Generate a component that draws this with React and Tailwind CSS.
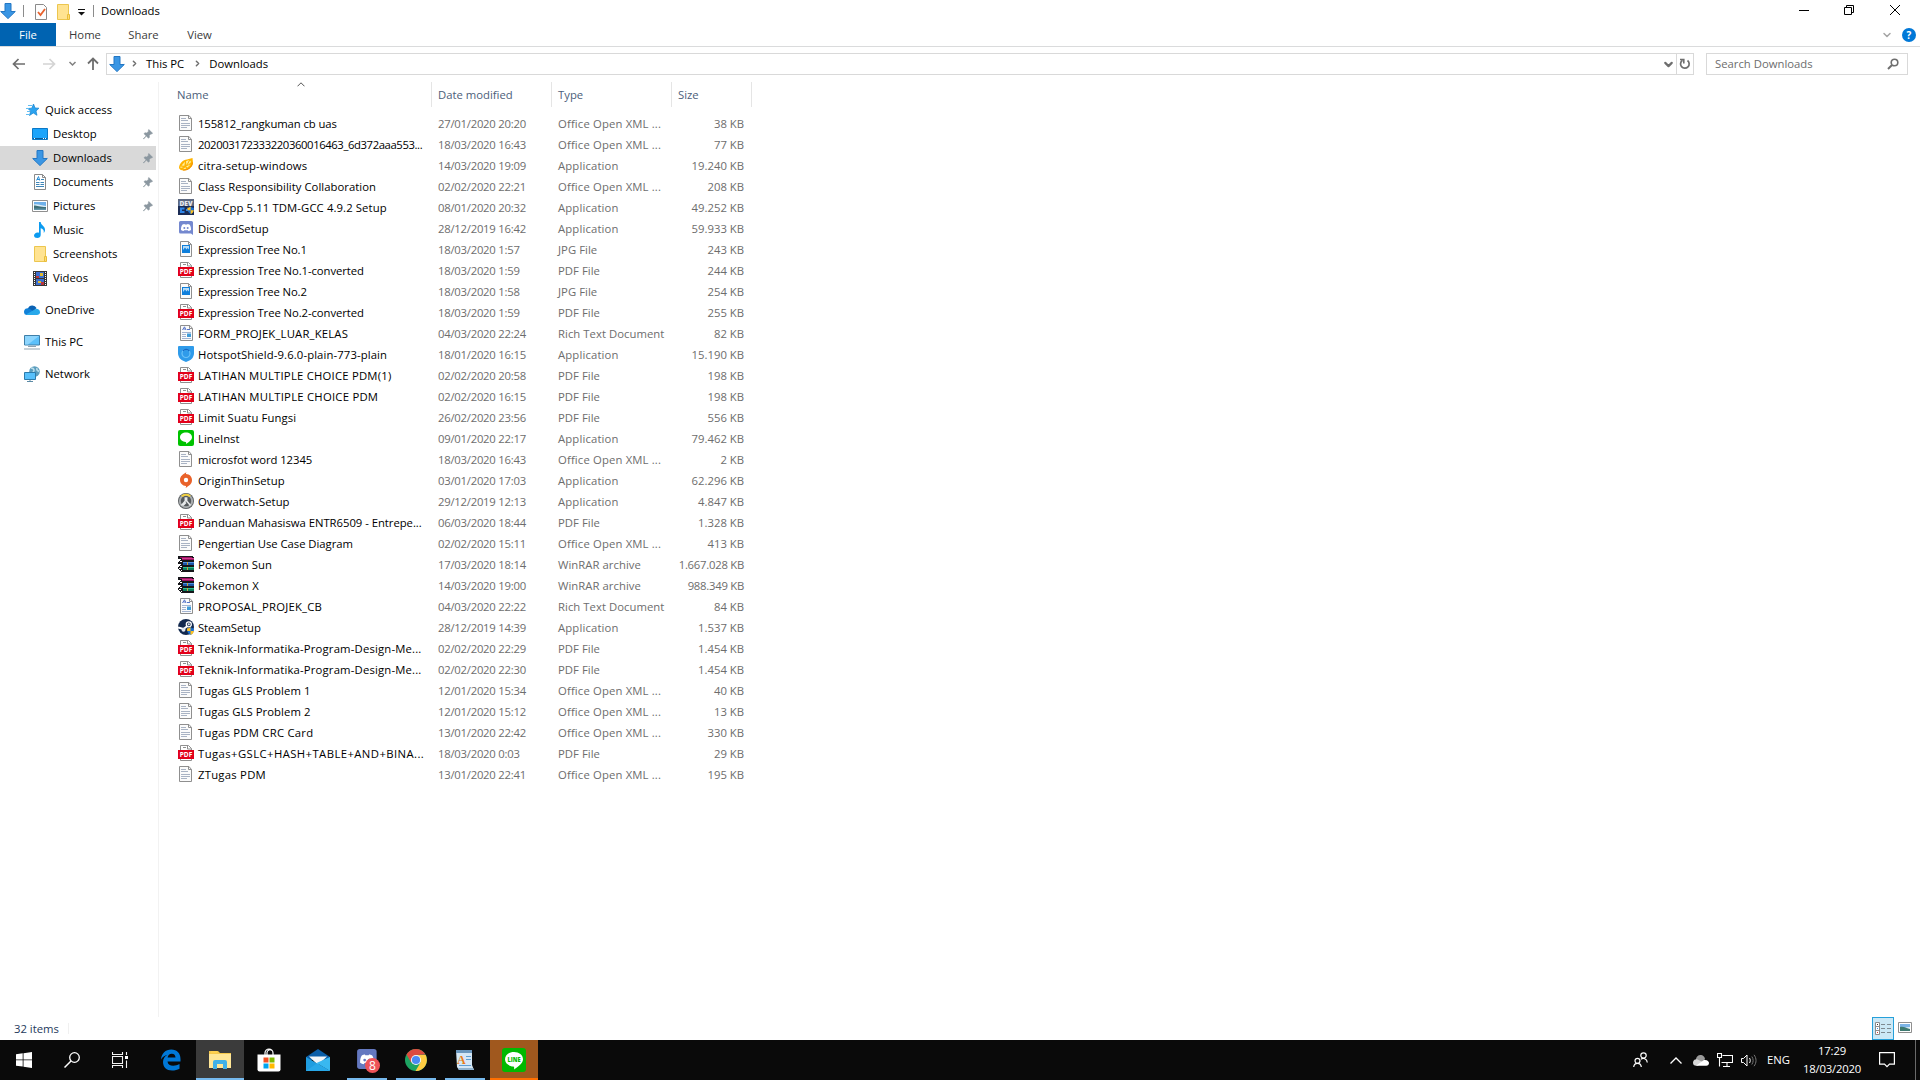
import { ChevronDown, ChevronRight } from 'lucide-react';

const DownArrow = ({ className }) => (
  <svg width="16" height="16" viewBox="0 0 16 16" className={className}>
    <path d="M5 .5h6v8h4.3L8 15.6.7 8.500H5z" fill="#3a96e4" stroke="#2377c4" strokeWidth="1" />
  </svg>
);

const FolderIcon = () => (
  <svg width="16" height="16" viewBox="0 0 16 16">
    <path d="M2.500.5h11v15h-11z" fill="#ffe391" stroke="#ecc64f" />
    <path d="M12.500 10.500h2v5h-2z" fill="#ffdc74" stroke="#e8bd3a" />
  </svg>
);

const Page = ({ children }) => (
  <>
    <path d="M1.500.5h9.500l2.500 3v12h-12z" fill="#fbfbfb" stroke="#8f8f8f" />
    <path d="M10.500.5v3h3" fill="none" stroke="#8f8f8f" />
    {children}
  </>
);

const DocIcon = () => (
  <svg width="16" height="16" viewBox="0 0 16 16">
    <Page>
      <path d="M3 3.500h5M3 5.500h7M3 8.500h9M3 10.500h9M3 12.500h6" stroke="#a9b3c4" />
    </Page>
  </svg>
);

const RtfIcon = () => (
  <svg width="16" height="16" viewBox="0 0 16 16">
    <g transform="translate(1 0)">
      <Page>
        <path d="M3.500 5 5.500 1.800 7 5M4.500 4h2M8 4.500h3" fill="none" stroke="#5573c8" />
        <path d="M3 7.500h9M3 9.500h4M3 11.500h4M3 13.500h9" stroke="#a3b4d2" />
        <path d="M8 8.500h4v3.500H8z" fill="#3f9bd8" />
      </Page>
    </g>
  </svg>
);

const DocumentsIcon = () => (
  <svg width="16" height="16" viewBox="0 0 16 16">
    <path d="M2.500.5h8l3 3v12h-11z" fill="#fff" stroke="#8a8a8a" />
    <path d="M10.500.5v3h3" fill="none" stroke="#8a8a8a" />
    <path d="M4.500 6.500 6.500 2.500l1.200 4M5 5.500h3" fill="none" stroke="#2b8fd6" />
    <path d="M9 5.500h3M4 8.500h3.500M8.500 8.500h3.500M4 10.500h3.500M8.500 10.500h3.500M4 12.500h8" stroke="#3f86b8" />
  </svg>
);

const JpgIcon = () => (
  <svg width="16" height="16" viewBox="0 0 16 16">
    <path d="M2.500.5h8l3 3v12h-11z" fill="#fbfbfb" stroke="#8f8f8f" />
    <path d="M10.500.5v3h3" fill="none" stroke="#8f8f8f" />
    <path d="M4 4h8v8H4z" fill="#0f7fdc" />
    <path d="M5 5h6v3.500L9.500 7 8.500 8.500 7 6.500 5 9z" fill="#b5dcf8" />
  </svg>
);

const PdfIcon = () => (
  <svg width="16" height="16" viewBox="0 0 16 16">
    <path d="M2.500.5h8l3 3v12h-11z" fill="#fff" stroke="#8f8f8f" />
    <path d="M9.500.5v3.500h4M5 2.500h3" fill="none" stroke="#8f8f8f" />
    <path d="M0 5h16v9H0z" fill="#e2001a" />
    <text x="8" y="12" textAnchor="middle" fontSize="7" fontWeight="700" fill="#fff" className="font-['Open_Sans',sans-serif]" textLength="12.500" lengthAdjust="spacingAndGlyphs">PDF</text>
  </svg>
);

const CitraIcon = () => (
  <svg width="16" height="16" viewBox="0 0 16 16">
    <path d="M1 10.500C1.500 6.500 5 2.500 9 2.500L14.500 1 15 6c-.500 4.500-5 7.500-9 7.500-3 0-5-1-5-3z" fill="#ffb400" />
    <path d="M3.500 8.500 7 4.800l-.7 4zM8 4.200l3-1.200-2.500 5zM12 3.500l1.200 1.500L9.500 8.200zM12.500 7.500 9.500 10.500 8 9.500zM7.500 10.200l.5 1.600-3.500.6zM5.500 10l-3 1V9.500z" fill="#fff0a0" />
    <path d="M14.300 5.500c.2 4.500-4.500 8-9.300 7.500" fill="none" stroke="#f28a00" />
  </svg>
);

const ShieldOverlay = () => (
  <>
    <path d="M9 9.500c2 0 3-1 3.500-1.500.8.800 2 1.500 3.500 1.500 0 3-1 5.500-3.500 6.500C10 15 9 12.500 9 9.500z" fill="#1c6fd0" />
    <path d="M12.500 8v4H16c-.5 2-1.500 3.300-3.500 4v-4H9.200L9 9.500c2 0 3-1 3.500-1.500z" fill="#ffc220" />
  </>
);

const DevIcon = () => (
  <svg width="16" height="16" viewBox="0 0 16 16">
    <path d="M0 0h16v16H0z" fill="#1b2c55" />
    <path d="M0 0h16v7H0z" fill="#5c6880" />
    <text x="8" y="6.500" textAnchor="middle" fontSize="7" fontWeight="800" fill="#e6e9ee" className="font-['Open_Sans',sans-serif]" textLength="13" lengthAdjust="spacingAndGlyphs">DEV</text>
    <path d="M6.500 9.500H3v3.500h3.500M8 11h2" fill="none" stroke="#2f86e8" strokeWidth="2" />
    <g transform="translate(1 0) scale(.93)"><ShieldOverlay /></g>
  </svg>
);

const discordFace = 'M4.200 4.800C5 4.200 6 4 6.500 4l.3.600h2.400l.3-.6c.5 0 1.500.2 2.300.8.9 1.500 1.300 3.200 1.200 5.200-.9.700-1.700 1-2.600 1.100l-.6-.9H6.200l-.6.900C4.700 11 3.900 10.700 3 10c-.1-2 .3-3.700 1.200-5.200z';

const DiscordIcon = () => (
  <svg width="16" height="16" viewBox="0 0 16 16">
    <path d="M2.500 1h11A1.500 1.500 0 0 1 15 2.500V15l-2-1.500H2.500A1.500 1.500 0 0 1 1 12V2.500A1.500 1.500 0 0 1 2.500 1z" fill="#7488cf" />
    <path d={discordFace} fill="#fff" />
    <circle cx="6.300" cy="8" r="1" fill="#7488cf" />
    <circle cx="9.700" cy="8" r="1" fill="#7488cf" />
  </svg>
);

const HotspotIcon = () => (
  <svg width="16" height="16" viewBox="0 0 16 16">
    <path d="M1 0h14a1 1 0 0 1 1 1v6c0 4.500-3 7.500-8 9-5-1.500-8-4.500-8-9V1a1 1 0 0 1 1-1z" fill="#2f9bea" />
    <circle cx="8" cy="7.500" r="4" fill="none" stroke="#6cc2f8" strokeWidth="1.200" />
    <path d="M5 4.800a4 4 0 0 1 6.300.2" fill="none" stroke="#1769c4" strokeWidth="1.300" />
  </svg>
);

const LineIcon = () => (
  <svg width="16" height="16" viewBox="0 0 16 16">
    <rect width="16" height="16" rx="2" fill="#00c300" />
    <path d="M8 2.500c3.300 0 6 2 6 4.700 0 2.600-3 4.800-6 6.800.3-1 .2-1.800-.3-2C4.500 11.700 2 9.800 2 7.200 2 4.500 4.700 2.500 8 2.500z" fill="#fff" />
  </svg>
);

const OriginIcon = () => (
  <svg width="16" height="16" viewBox="0 0 16 16">
    <path d="M8.500 0c-.5.800-.6 1.400-.5 2 3.600 0 6 2.800 6 5.900C14 12 11 13.500 7.500 16c.5-.9.600-1.500.5-2.100-3.600 0-6-2.800-6-5.900C2 4 5 2.500 8.500 0z" fill="#e9622a" />
    <circle cx="8" cy="8" r="2.200" fill="#fff" />
  </svg>
);

const OverwatchIcon = () => (
  <svg width="16" height="16" viewBox="0 0 16 16">
    <circle cx="8" cy="8" r="8" fill="#55595c" />
    <circle cx="8" cy="8" r="6.200" fill="none" stroke="#a9adaf" strokeWidth="2" />
    <path d="M3.800 3.300a6.200 6.200 0 0 1 8.400 0" fill="none" stroke="#f3d03b" strokeWidth="2" />
    <path d="M3.500 12.500 7.300 8V5h1.400v3l3.800 4.500M8 9.500l-3 3" fill="none" stroke="#e8eaeb" strokeWidth="1.500" />
  </svg>
);

const RarIcon = () => (
  <svg width="16" height="16" viewBox="0 0 16 16" shapeRendering="crispEdges">
    <path d="M0 0h13l3 1v15H4l-4-3v-2l2-1-2-2V6l2-1-2-2z" fill="#16161a" />
    <path d="M2 1h12v1H2zM4 3h12v1H4z" fill="#9c0f62" />
    <path d="M4 2h12v1H4z" fill="#d13a8c" />
    <path d="M5 6h11v3H5z" fill="#1b55a8" />
    <path d="M5 6h11v1H5z" fill="#4f92e0" />
    <path d="M5 11h11v3H5z" fill="#0b7f5d" />
    <path d="M5 11h11v1H5z" fill="#2fbf90" />
    <path d="M1 3h2v1H1zM2 5h2v1H2zM1 8h2v1H1zM2 10h2v1H2zM1 12h2v1H1zM3 14h1v1H3z" fill="#fff" />
    <path d="M9 6h1v3H9zM9 11h1v3H9z" fill="#c7a43f" />
  </svg>
);

const SteamIcon = () => (
  <svg width="16" height="16" viewBox="0 0 16 16">
    <circle cx="8" cy="8" r="8" fill="#13294e" />
    <circle cx="10.800" cy="5.300" r="2.500" fill="none" stroke="#fff" strokeWidth="1.300" />
    <circle cx="10.800" cy="5.300" r="1.100" fill="#dfe6ef" />
    <path d="M0 8.500 5.500 10 9.500 7" fill="none" stroke="#fff" strokeWidth="2" />
    <circle cx="5.500" cy="10.800" r="2" fill="#dfe6ef" />
    <ShieldOverlay />
  </svg>
);

const icons = {
  doc: DocIcon,
  rtf: RtfIcon,
  jpg: JpgIcon,
  pdf: PdfIcon,
  citra: CitraIcon,
  dev: DevIcon,
  discord: DiscordIcon,
  hotspot: HotspotIcon,
  line: LineIcon,
  origin: OriginIcon,
  overwatch: OverwatchIcon,
  rar: RarIcon,
  steam: SteamIcon,
};

const XML = 'Office Open XML ...';
const APP = 'Application';
const PDF = 'PDF File';
const RTF = 'Rich Text Document';

// icon, name, date, type, size, letter spacing of the name
const files = [
  ['doc', '155812_rangkuman cb uas', '27/01/2020 20:20', XML, '38 KB', 'tracking-[-0.1px]'],
  ['doc', '202003172333220360016463_6d372aaa553...', '18/03/2020 16:43', XML, '77 KB', 'tracking-[-0.4px]'],
  ['citra', 'citra-setup-windows', '14/03/2020 19:09', APP, '19.240 KB', 'tracking-[0.15px]'],
  ['doc', 'Class Responsibility Collaboration', '02/02/2020 22:21', XML, '208 KB', 'tracking-[0.04px]'],
  ['dev', 'Dev-Cpp 5.11 TDM-GCC 4.9.2 Setup', '08/01/2020 20:32', APP, '49.252 KB', 'tracking-[0.11px]'],
  ['discord', 'DiscordSetup', '28/12/2019 16:42', APP, '59.933 KB'],
  ['jpg', 'Expression Tree No.1', '18/03/2020 1:57', 'JPG File', '243 KB', 'tracking-[-0.14px]'],
  ['pdf', 'Expression Tree No.1-converted', '18/03/2020 1:59', PDF, '244 KB', 'tracking-[-0.08px]'],
  ['jpg', 'Expression Tree No.2', '18/03/2020 1:58', 'JPG File', '254 KB', 'tracking-[-0.14px]'],
  ['pdf', 'Expression Tree No.2-converted', '18/03/2020 1:59', PDF, '255 KB', 'tracking-[-0.08px]'],
  ['rtf', 'FORM_PROJEK_LUAR_KELAS', '04/03/2020 22:24', RTF, '82 KB', 'tracking-[0.18px]'],
  ['hotspot', 'HotspotShield-9.6.0-plain-773-plain', '18/01/2020 16:15', APP, '15.190 KB', 'tracking-[0.11px]'],
  ['pdf', 'LATIHAN MULTIPLE CHOICE PDM(1)', '02/02/2020 20:58', PDF, '198 KB', 'tracking-[0.22px]'],
  ['pdf', 'LATIHAN MULTIPLE CHOICE PDM', '02/02/2020 16:15', PDF, '198 KB', 'tracking-[0.24px]'],
  ['pdf', 'Limit Suatu Fungsi', '26/02/2020 23:56', PDF, '556 KB', 'tracking-[0.1px]'],
  ['line', 'LineInst', '09/01/2020 22:17', APP, '79.462 KB'],
  ['doc', 'microsfot word 12345', '18/03/2020 16:43', XML, '2 KB', 'tracking-[-0.06px]'],
  ['origin', 'OriginThinSetup', '03/01/2020 17:03', APP, '62.296 KB', 'tracking-[0.08px]'],
  ['overwatch', 'Overwatch-Setup', '29/12/2019 12:13', APP, '4.847 KB', 'tracking-[0.05px]'],
  ['pdf', 'Panduan Mahasiswa ENTR6509 - Entrepe...', '06/03/2020 18:44', PDF, '1.328 KB', 'tracking-[-0.03px]'],
  ['doc', 'Pengertian Use Case Diagram', '02/02/2020 15:11', XML, '413 KB', 'tracking-[-0.04px]'],
  ['rar', 'Pokemon Sun', '17/03/2020 18:14', 'WinRAR archive', '1.667.028 KB', 'tracking-[0.1px]'],
  ['rar', 'Pokemon X', '14/03/2020 19:00', 'WinRAR archive', '988.349 KB', 'tracking-[0.15px]'],
  ['rtf', 'PROPOSAL_PROJEK_CB', '04/03/2020 22:22', RTF, '84 KB', 'tracking-[0.2px]'],
  ['steam', 'SteamSetup', '28/12/2019 14:39', APP, '1.537 KB', 'tracking-[-0.1px]'],
  ['pdf', 'Teknik-Informatika-Program-Design-Me...', '02/02/2020 22:29', PDF, '1.454 KB', 'tracking-[0.17px]'],
  ['pdf', 'Teknik-Informatika-Program-Design-Me...', '02/02/2020 22:30', PDF, '1.454 KB', 'tracking-[0.17px]'],
  ['doc', 'Tugas GLS Problem 1', '12/01/2020 15:34', XML, '40 KB', 'tracking-[0.06px]'],
  ['doc', 'Tugas GLS Problem 2', '12/01/2020 15:12', XML, '13 KB', 'tracking-[0.06px]'],
  ['doc', 'Tugas PDM CRC Card', '13/01/2020 22:42', XML, '330 KB', 'tracking-[0.24px]'],
  ['pdf', 'Tugas+GSLC+HASH+TABLE+AND+BINA...', '18/03/2020 0:03', PDF, '29 KB', 'tracking-[0.42px]'],
  ['doc', 'ZTugas PDM', '13/01/2020 22:41', XML, '195 KB', 'tracking-[0.25px]'],
];

const QuickAccessIcon = () => (
  <svg width="16" height="16" viewBox="0 0 16 16">
    <path d="m9.500 2 1.600 4 3.900.2-3 2.800 1 4.300-3.700-2.300-3.800 2.500 1.200-4.400L3.800 6.500l4-.3z" fill="#2ba3f0" stroke="#1683cf" strokeWidth=".7" />
    <path d="M4 3.500h4M2 6.500h3M3 9.500h3M2 12.500h4" stroke="#62bdf2" />
  </svg>
);

const DesktopIcon = () => (
  <svg width="16" height="16" viewBox="0 0 16 16">
    <path d="M.5 2.500h15v11H.5z" fill="#1ba4fb" stroke="#0b78c6" />
    <path d="M1 12.500h14" stroke="#0a5b98" />
    <path d="M2 12.500h1M11 12.500h1M13 12.500h1" stroke="#fff" />
  </svg>
);

const PicturesIcon = () => (
  <svg width="16" height="16" viewBox="0 0 16 16">
    <path d="M.5 2.500h15v11H.5z" fill="#fff" stroke="#8f8f8f" />
    <path d="M2 4h12v8H2z" fill="#6fb1ea" />
    <path d="M2 6.500c4-1 7 1 12 1.500V9H2z" fill="#d9ecf7" />
    <path d="M2 7.500c3 0 6 1.500 12 1.500v3H2z" fill="#3d6f78" />
    <path d="M2 10.500h12V12H2z" fill="#5f93a8" />
  </svg>
);

const MusicIcon = () => (
  <svg width="16" height="16" viewBox="0 0 16 16">
    <path d="M7 0h1.700c.2 3.500 4.800 4 4.300 8.500-.2 1.200-.7 2-1.300 2.500.6-3-1-4.200-3-4.700V13c0 1.800-1.500 3-3.400 3C3.500 16 2 15.200 2 13.500S3.700 10.400 5.500 10.400c.6 0 1.100.1 1.500.3z" fill="#0c9bf0" />
  </svg>
);

const VideosIcon = () => (
  <svg width="16" height="16" viewBox="0 0 16 16">
    <path d="M1 1h14v15H1z" fill="#363636" />
    <path d="M4 2h8v6H4zM4 9h8v6H4z" fill="#3c6fd0" />
    <path d="M4 6h3v2H4zM9 12h3v3H9z" fill="#b9343c" />
    <path d="M8 3h3v3H8zM6 11h3v2H6z" fill="#e0b92f" />
    <path d="M2.500 2v13M13.500 2v13" stroke="#fff" strokeDasharray="1 1" />
  </svg>
);

const OneDriveIcon = () => (
  <svg width="16" height="16" viewBox="0 0 16 16">
    <path d="M4 6.500A4.600 4.600 0 0 1 12.500 6L9 10 2 9z" fill="#0a62b4" />
    <path d="M0 10a3.700 3.700 0 0 1 5-3.600L12 11l-9.500 2A3 3 0 0 1 0 10z" fill="#1181d8" />
    <path d="M2 12.500 12 6.700c2.500 0 4 1.500 4 3.500 0 1.800-1.500 2.800-3 2.800H3z" fill="#28a8ea" />
  </svg>
);

const ThisPcIcon = () => (
  <svg width="16" height="16" viewBox="0 0 16 16">
    <path d="M.5 1.500h15v9.500H.5z" fill="#5cc0fa" stroke="#3f7fa8" />
    <path d="M1 2h14L4 10.500H1z" fill="#8dd5fd" />
    <path d="M4 12.500h8M0 15h16" stroke="#8fa3b0" />
  </svg>
);

const NetworkIcon = () => (
  <svg width="16" height="16" viewBox="0 0 16 16">
    <circle cx="10.500" cy="5.500" r="5.300" fill="#5b9dbd" />
    <path d="M7 2c2 0 3 1 3 2.500S8 6 8 8M13 2c-1 2 1 3 2 3.500" fill="none" stroke="#b9dcea" strokeWidth="1.500" />
    <path d="M.5 6.500h11v7H.5z" fill="#57c0fb" stroke="#2c7bab" />
    <path d="M3 15.500h6M6 14v1" stroke="#5b8aa5" />
  </svg>
);

const PinIcon = () => (
  <svg width="10" height="11" viewBox="0 0 10 11">
    <path d="m5.800.5 3.800 3.800-1 .6-.6-.1L6.300 6.500l.1 1.800-.9.900-2.200-2.100L.6 10.100l-.3-.3 2.900-2.900L1 4.700l1-.9 1.800.1 1.800-1.700-.2-.7z" fill="#8b97a0" stroke="#8b97a0" strokeWidth=".6" />
  </svg>
);

const quickItems = [
  { label: 'Desktop', icon: DesktopIcon, pinned: true },
  { label: 'Downloads', icon: DownArrow, pinned: true, active: true },
  { label: 'Documents', icon: DocumentsIcon, pinned: true },
  { label: 'Pictures', icon: PicturesIcon, pinned: true },
  { label: 'Music', icon: MusicIcon },
  { label: 'Screenshots', icon: FolderIcon },
  { label: 'Videos', icon: VideosIcon },
];

const TitleBar = () => (
  <div className="flex h-[23px] items-center">
    <DownArrow className="mb-px" />
    <div className="mb-px ml-[7px] h-3 w-px bg-[#8c8c8c]" />
    <svg width="14" height="16" viewBox="0 0 14 16" className="ml-[10px]">
      <path d="M1.500.5h8l3 3v12h-11z" fill="#fdfdfd" stroke="#8a8a8a" />
      <path d="m4 8 2.500 3L11 5" fill="none" stroke="#e8612c" strokeWidth="1.800" />
    </svg>
    <div className="ml-[7px]"><FolderIcon /></div>
    <svg width="7" height="7" viewBox="0 0 7 7" className="mt-[2px] ml-[7px]">
      <path d="M0 .5h7" stroke="#111" />
      <path d="M0 3h7L3.500 6.500z" fill="#111" />
    </svg>
    <div className="mb-px ml-2 h-3 w-px bg-[#8c8c8c]" />
    <span className="mb-px ml-[7px] text-black">Downloads</span>
    <div className="ml-auto flex h-full items-start">
      <svg width="10" height="20" viewBox="0 0 10 20" className="mr-[35px]">
        <path d="M0 10.500h10" stroke="#000" />
      </svg>
      <svg width="10" height="20" viewBox="0 0 10 20" className="mr-9">
        <path d="M.5 7.500h7v7h-7zM2.500 7.500v-2h7v7h-2" fill="none" stroke="#000" />
      </svg>
      <svg width="10" height="20" viewBox="0 0 10 20" className="mr-[20px]">
        <path d="m0 5 10 10M10 5 0 15" stroke="#000" />
      </svg>
    </div>
  </div>
);

const Ribbon = () => (
  <div className="flex h-6 items-center border-b border-[#dadbdc] text-[#3b3b3b]">
    <div className="flex h-full w-14 items-center justify-center bg-[#0063b1] text-white">File</div>
    <span className="w-[58px] text-center">Home</span>
    <span className="w-[59px] text-center">Share</span>
    <span className="w-[53px] text-center">View</span>
    <ChevronDown size={12} strokeWidth={3} className="mr-[9px] ml-auto text-[#a5a5a5]" />
    <div className="mr-1 flex size-[14px] items-center justify-center rounded-full bg-[#0078d7] text-[10px] font-bold text-white">?</div>
  </div>
);

const AddressBar = () => (
  <div className="flex h-[34px] items-center pb-px">
    <svg width="88" height="14" viewBox="0 0 88 14" className="ml-3" fill="none">
      <path d="M13 7H2M6.500 2 1.500 7l5 5" stroke="#6e6e6e" strokeWidth="1.700" />
      <path d="M31 7h11M37.500 2l5 5-5 5" stroke="#d4d4d4" strokeWidth="1.700" />
      <path d="m57.500 5 3 3 3-3" stroke="#808080" strokeWidth="1.500" />
      <path d="M81 13V2M76 6.500l5-5 5 5" stroke="#6e6e6e" strokeWidth="1.800" />
    </svg>
    <div className="ml-[6px] flex h-[22px] w-[1588px] items-center border border-[#d9d9d9] text-black">
      <DownArrow className="ml-[2px]" />
      <ChevronRight size={9} strokeWidth={4} className="ml-[5px] text-[#6e6e6e]" />
      <span className="ml-[7px]">This PC</span>
      <ChevronRight size={9} strokeWidth={4} className="ml-[9px] text-[#6e6e6e]" />
      <span className="ml-[7px]">Downloads</span>
      <ChevronDown size={13} strokeWidth={4} className="mt-[2px] mr-px ml-auto text-[#6e6e6e]" />
      <div className="flex h-full w-[17px] items-center justify-center border-l border-[#d9d9d9]">
        <svg width="12" height="12" viewBox="0 0 12 12" fill="none">
          <path d="M8.500 2.500a4.300 4.300 0 1 1-5-.2" stroke="#6e6e6e" strokeWidth="1.700" />
          <path d="M1 1.500h3.800v4" stroke="#6e6e6e" strokeWidth="1.600" />
        </svg>
      </div>
    </div>
    <div className="ml-3 flex h-[22px] w-[202px] items-center border border-[#d9d9d9] pr-2 pl-2">
      <span className="text-[#6d6d6d]">Search Downloads</span>
      <svg width="12" height="12" viewBox="0 0 12 12" className="ml-auto" fill="none">
        <circle cx="7.500" cy="4.500" r="3.300" stroke="#6e6e6e" strokeWidth="1.600" />
        <path d="M5 7 1 11" stroke="#6e6e6e" strokeWidth="2" />
      </svg>
    </div>
  </div>
);

const Sidebar = () => (
  <aside className="mt-[1px] w-[159px] border-r border-[#f2f2f2] pt-4 text-black">
    <div className="flex h-6 items-center gap-[5px] pl-6">
      <QuickAccessIcon />
      <span>Quick access</span>
    </div>
    {quickItems.map(({ label, icon: Icon, pinned, active }) => (
      <div
        key={label}
        className={`flex h-6 w-[156px] items-center gap-[5px] pr-[3px] pl-8 ${active ? 'bg-[#d9d9d9]' : ''}`}
      >
        <Icon />
        <span className="flex-1">{label}</span>
        {pinned && <PinIcon />}
      </div>
    ))}
    <div className="mt-2 flex h-6 items-center gap-[5px] pl-6">
      <OneDriveIcon />
      <span>OneDrive</span>
    </div>
    <div className="mt-2 flex h-6 items-center gap-[5px] pl-6">
      <ThisPcIcon />
      <span>This PC</span>
    </div>
    <div className="mt-2 flex h-6 items-center gap-[5px] pl-6">
      <NetworkIcon />
      <span>Network</span>
    </div>
  </aside>
);

const FileList = () => (
  <main className="flex-1">
    <div className="relative mt-px flex h-[25px] items-center pl-[18px] text-[#4c607a]">
      <svg width="8" height="5" viewBox="0 0 8 5" fill="none" className="absolute top-0 left-[138px]">
        <path d="m.5 4.300 3.500-3.500 3.500 3.500" stroke="#555" />
      </svg>
      <div className="flex h-full w-[255px] items-center border-r border-[#e5e5e5]">Name</div>
      <div className="flex h-full w-[120px] items-center border-r border-[#e5e5e5] pl-[6px]">Date modified</div>
      <div className="flex h-full w-[120px] items-center border-r border-[#e5e5e5] pl-[6px]">Type</div>
      <div className="flex h-full w-[80px] items-center border-r border-[#e5e5e5] pl-[6px]">Size</div>
    </div>
    <div className="pt-[6px]">
      {files.map(([icon, name, date, type, size, tracking], i) => {
        const Icon = icons[icon];
        return (
          <div key={i} className="flex h-[21px] items-center pl-[19px] text-[#6d6d6d]">
            <div className="mb-px"><Icon /></div>
            <span className={`ml-1 w-[240px] whitespace-nowrap text-black ${tracking || ''}`}>{name}</span>
            <span className="w-[120px] tracking-[-0.24px] whitespace-nowrap">{date}</span>
            <span className={`w-[106px] whitespace-nowrap ${type === XML || type === APP ? 'tracking-[0.15px]' : 'tracking-[0.04px]'}`}>{type}</span>
            <span className={`w-[80px] text-right whitespace-nowrap ${size.length > 9 ? 'tracking-[-0.25px]' : ''}`}>{size}</span>
          </div>
        );
      })}
    </div>
  </main>
);

const StatusBar = () => (
  <div className="flex h-[23px] items-center">
    <span className="ml-[14px] w-[54px] text-[#1e395b]">32 items</span>
    <div className="h-[11px] w-px bg-[#f0f0f0]" />
    <div className="ml-auto flex h-[23px] w-[22px] items-center justify-center border border-[#26a0da] bg-[#cbe8f6]">
      <svg width="16" height="14" viewBox="0 0 16 14">
        <path d="M.5.5h4v12h-4zM.5 4.500h4M.5 8.500h4" fill="#fff" stroke="#8c8c8c" />
        <path d="M6 2.500h4M12 2.500h4M6 6.500h4M12 6.500h4M6 10.500h4M12 10.500h4" stroke="#7d8a92" />
        <path d="M2 2h1v1H2z" fill="#333" />
        <path d="M2 6h1v1H2z" fill="#3d8fe0" />
        <path d="M2 10h1v1H2z" fill="#d63a2e" />
      </svg>
    </div>
    <svg width="14" height="11" viewBox="0 0 14 11" className="mr-2 mb-[2px] ml-1">
      <path d="M.5.5h13v10H.5z" fill="#fff" stroke="#8f8f8f" />
      <path d="M2 2h10v7H2z" fill="#7db4e6" />
      <path d="M2 5c3-1 6 1 10 1.500V9H2z" fill="#3e7a70" />
      <path d="M7 5.500 12 5v2z" fill="#e3f0f5" />
    </svg>
  </div>
);

const StartIcon = () => (
  <svg width="16" height="16" viewBox="0 0 16 16">
    <path d="M0 2.300 6.700 1.300v6.200H0zM7.500 1.200 16 0v7.500H7.500zM0 8.300h6.700v6.300L0 13.700zM7.500 8.300H16V16l-8.500-1.200z" fill="#fff" />
  </svg>
);

const TaskSearchIcon = () => (
  <svg width="16" height="16" viewBox="0 0 16 16" fill="none">
    <circle cx="10.500" cy="5.500" r="4.800" stroke="#fff" strokeWidth="1.300" />
    <path d="M7 9 .5 15.500" stroke="#fff" strokeWidth="1.500" />
  </svg>
);

const TaskViewIcon = () => (
  <svg width="16" height="16" viewBox="0 0 16 16" fill="none">
    <path d="M.5 0v2.500h10V0M.5 16v-2.500h10V16M.5 4.500h10v7H.5zM14.500 0v3M14.500 8.500V16" stroke="#f2f2f2" strokeWidth="1.100" />
    <path d="M13 4h3v3h-3z" fill="#fff" />
  </svg>
);

const EdgeIcon = () => (
  <svg width="22" height="22" viewBox="0 0 22 22">
    <path d="M1 10.500C1.500 4.500 5.500.500 11.200.5c6 0 9.300 4 9.300 9.500v2.500H7.500c.3 3 2.600 4.200 5.700 4.200 2.400 0 4.200-.6 6.300-1.700v4.700c-2.200 1.200-4.500 1.800-7.500 1.800-5.500 0-9-3.500-9-8.500 0-3.200 1.700-5.700 4.500-7.200C4.500 6.500 2.500 8 1 10.500zm6.600-2h7.900c-.1-2.300-1.200-3.700-3.700-3.700-2.400 0-3.800 1.400-4.200 3.700z" fill="#0078d7" />
  </svg>
);

const ExplorerIcon = () => (
  <svg width="22" height="20" viewBox="0 0 22 20">
    <path d="M0 1h9l2 2h11v15H0z" fill="#f5c84c" />
    <path d="M0 4h22v14H0z" fill="#ffe696" />
    <path d="M2 1h6v2H2z" fill="#ffd04d" />
    <path d="M4 19v-7a2 2 0 0 1 2-2h10a2 2 0 0 1 2 2v7h-4v-5H8v5z" fill="#3fb1e8" />
  </svg>
);

const StoreIcon = () => (
  <svg width="24" height="24" viewBox="0 0 24 24">
    <path d="M8 7V5a4 4 0 0 1 8 0v2M10 7V4.500a3 3 0 0 1 5-2" fill="none" stroke="#fff" strokeWidth="1.200" />
    <path d="M.5 6.500h23v15a2 2 0 0 1-2 2h-19a2 2 0 0 1-2-2z" fill="#fff" />
    <path d="M6.500 9.500h5v5h-5z" fill="#f25022" />
    <path d="M12.500 9.500h5v5h-5z" fill="#7fba00" />
    <path d="M6.500 15.500h5v5h-5z" fill="#00a4ef" />
    <path d="M12.500 15.500h5v5h-5z" fill="#ffb900" />
  </svg>
);

const MailIcon = () => (
  <svg width="24" height="24" viewBox="0 0 24 24">
    <path d="M0 9 12 1l12 8v3H0z" fill="#0a5ea8" />
    <path d="M3 8.500h18L12 17z" fill="#f2f6f9" />
    <path d="M0 9l24 14H0z" fill="#1f9de0" />
    <path d="M24 9 10.500 15 24 23z" fill="#39b8f0" />
    <path d="M0 23 11 15.200 24 23z" fill="#28a8e8" />
  </svg>
);

const TaskDiscordIcon = () => (
  <div className="relative">
    <svg width="22" height="22" viewBox="0 0 16 16">
      <rect x=".8" width="14.200" height="14.500" rx="2" fill="#6478c0" />
      <path d={discordFace} fill="#fff" />
      <circle cx="6.300" cy="8" r="1" fill="#6478c0" />
      <circle cx="9.700" cy="8" r="1" fill="#6478c0" />
    </svg>
    <span className="absolute top-[9px] left-[9px] flex size-[15px] items-center justify-center rounded-full bg-[#ee5358] text-[12px] text-white">8</span>
  </div>
);

const ChromeIcon = () => (
  <svg width="22" height="22" viewBox="0 0 22 22">
    <circle cx="11" cy="11" r="11" fill="#1da462" />
    <path d="M1.500 5.500A11 11 0 0 1 20.500 5.500L11 6 6.200 13.700z" fill="#dd4b3e" />
    <path d="M20.700 6A11 11 0 0 1 10.500 22L15.500 13.500 11 6z" fill="#ffcd42" />
    <circle cx="11" cy="11" r="5.100" fill="#f5f5f5" />
    <circle cx="11" cy="11" r="4.100" fill="#4a8af4" />
  </svg>
);

const WordPadIcon = () => (
  <svg width="20" height="22" viewBox="0 0 20 22">
    <path d="M1 1h16v15l2 5H4l-2-3z" fill="#d5e7f5" />
    <path d="M1 1h16v3H1z" fill="#6b97bd" />
    <path d="M3 19h15l1 2H4z" fill="#8fb3cf" />
    <path d="M11 7.500h5M11 10.500h5M4 16.500h12" stroke="#5f9fd4" />
    <text x="2" y="14.500" fontSize="12" fontWeight="700" fill="#e87d17" className="font-['Liberation_Serif',serif]">A</text>
  </svg>
);

const TaskLineIcon = () => (
  <svg width="24" height="24" viewBox="0 0 24 24">
    <rect width="24" height="24" rx="3" fill="#00b900" />
    <path d="M12 4c5 0 9 3 9 7.300 0 3.700-4 6.700-9 10.200.4-1.500.2-2.700-.5-2.900C6.500 18 3 15.300 3 11.300 3 7 7 4 12 4z" fill="#fff" />
    <text x="12" y="13.500" textAnchor="middle" fontSize="6" fontWeight="800" fill="#00b900" className="font-['Open_Sans',sans-serif]" textLength="13" lengthAdjust="spacingAndGlyphs">LINE</text>
  </svg>
);

const apps = [
  { name: 'edge', icon: EdgeIcon },
  { name: 'explorer', icon: ExplorerIcon, tile: 'bg-[#3b3b3b]', bar: 'w-12 bg-[#76b9ed]' },
  { name: 'store', icon: StoreIcon },
  { name: 'mail', icon: MailIcon },
  { name: 'discord', icon: TaskDiscordIcon, bar: 'w-10 bg-[#76b9ed]' },
  { name: 'chrome', icon: ChromeIcon, bar: 'w-10 bg-[#76b9ed]' },
  { name: 'wordpad', icon: WordPadIcon, bar: 'w-10 bg-[#76b9ed]' },
  { name: 'line', icon: TaskLineIcon, tile: 'bg-[#a0581e]', bar: 'w-12 bg-[#ff6f00]' },
];

const Tray = () => (
  <div className="ml-auto flex h-full items-center text-white">
    <svg width="15" height="16" viewBox="0 0 15 16" fill="none" className="mr-[22px]">
      <circle cx="10.500" cy="3.500" r="2.700" stroke="#fff" strokeWidth="1.200" />
      <circle cx="4.500" cy="8.800" r="2.500" stroke="#fff" strokeWidth="1.200" />
      <path d="M.7 15c.2-2.500 1.800-3.700 3.800-3.700s3.600 1.200 3.800 3.700M8 7.200c2-1.500 6-.7 6.300 3.300" stroke="#fff" strokeWidth="1.200" />
    </svg>
    <svg width="12" height="7" viewBox="0 0 12 7" fill="none" className="mr-[11px]">
      <path d="M.5 6.500 6 1l5.500 5.500" stroke="#fff" strokeWidth="1.300" />
    </svg>
    <svg width="16" height="11" viewBox="0 0 16 11" className="mr-2">
      <path d="M3 5a4.500 4.500 0 0 1 9-1l-2 3-7 1z" fill="#9a9a9a" />
      <path d="M0 7.500a3.300 3.300 0 0 1 4.500-3L12 8l-8 2.700H3.200A3.200 3.200 0 0 1 0 7.500z" fill="#d8d8d8" />
      <path d="M3 10.800 11 5c3-.5 5 1 5 3 0 1.500-1 2.800-2.800 2.800z" fill="#fff" />
    </svg>
    <svg width="16" height="14" viewBox="0 0 16 14" fill="none" className="mr-2">
      <path d="M5.500 2.500h10v7H4.500M10 10v3M6 13.500h7M.5.500h4v4h-4zM2.500 5v8.500M0 13.500" stroke="#fff" strokeWidth="1.100" />
    </svg>
    <svg width="16" height="13" viewBox="0 0 16 13" fill="none" className="mr-[10px]">
      <path d="M.5 4.500h2l3.500-3.500v11L2.500 8.500h-2z" stroke="#fff" />
      <path d="M8.500 4c1 1.500 1 3.500 0 5" stroke="#fff" />
      <path d="M10.800 2.500c1.800 2.500 1.800 5.500 0 8M13 .8c2.700 3.500 2.700 7.900 0 11.400" stroke="#777" />
    </svg>
    <span className="w-[23px]">ENG</span>
    <div className="ml-[11px] flex w-[62px] flex-col items-center pb-px leading-[18px] tracking-[-0.2px]">
      <span>17:29</span>
      <span>18/03/2020</span>
    </div>
    <svg width="16" height="16" viewBox="0 0 16 16" fill="none" className="ml-4">
      <path d="M.6.6h14.800v11.500H10.500L8 14.700 5.500 12.100H.6z" stroke="#fff" strokeWidth="1.200" />
    </svg>
    <div className="mr-1 ml-5 h-full w-px bg-[#6a6a6a]" />
  </div>
);

const Taskbar = () => (
  <footer className="flex h-10 bg-[#0a0a0a]">
    <div className="flex w-12 items-center justify-center"><StartIcon /></div>
    <div className="flex w-12 items-center justify-center"><TaskSearchIcon /></div>
    <div className="flex w-12 items-center justify-center"><TaskViewIcon /></div>
    <div className="ml-[3px] flex gap-px">
      {apps.map(({ name, icon: Icon, tile, bar }) => (
        <div key={name} className={`flex w-12 flex-col items-center ${tile || ''}`}>
          <div className="flex flex-1 items-center pt-[2px]"><Icon /></div>
          <div className={`h-[2px] ${bar || ''}`} />
        </div>
      ))}
    </div>
    <Tray />
  </footer>
);

const App = () => {
  return (
    <div className="flex h-[1080px] w-[1920px] flex-col overflow-hidden bg-white font-['Open_Sans','Noto_Sans',sans-serif] text-[11.3px] leading-4">
      <TitleBar />
      <Ribbon />
      <AddressBar />
      <div className="flex min-h-0 flex-1">
        <Sidebar />
        <FileList />
      </div>
      <StatusBar />
      <Taskbar />
    </div>
  );
};

export default App;
